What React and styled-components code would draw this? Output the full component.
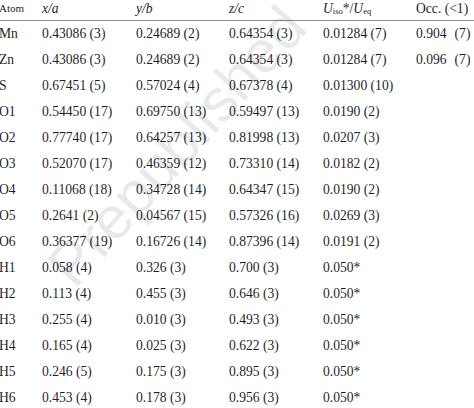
import React from "react";
import styled, { createGlobalStyle } from "styled-components";

const Global = createGlobalStyle`
  html, body { margin: 0; padding: 0; background: #fff; }
  body { font-family: "Liberation Serif", "Times New Roman", serif; color: #1f1f1f; }
`;

const Page = styled.div`
  position: relative;
  width: 474px;
  height: 408px;
  overflow: hidden;
  background: #fff;
`;

const Table = styled.div`
  margin-left: -1px;
  display: grid;
  grid-template-columns: 43px 94px 93px 94px 93px 58px;
`;

const HeadCell = styled.div`
  box-sizing: border-box;
  height: 20.5px;
  padding-top: 1px;
  border-bottom: 1.5px solid #8c8c8c;
  font-size: ${(p) => (p.$small ? "11px" : "13.6px")};
  font-style: ${(p) => (p.$italic ? "italic" : "normal")};
  line-height: 15px;
  white-space: nowrap;
`;

const Cell = styled.div`
  height: 26px;
  display: flex;
  align-items: center;
  font-size: 13.6px;
  white-space: nowrap;
`;

const Sub = styled.sub`
  font-style: normal;
  font-size: 8.5px;
  vertical-align: -1px;
`;

const Gap = styled.span`
  margin-left: ${(p) => p.$w}px;
`;

const Watermark = styled.div`
  position: absolute;
  left: 86px;
  top: 230px;
  height: 70px;
  line-height: 70px;
  transform-origin: 0 100%;
  transform: rotate(-48deg);
  font-family: "Liberation Sans", Arial, sans-serif;
  font-size: 60px;
  color: rgba(0, 0, 0, 0.085);
  white-space: nowrap;
  pointer-events: none;
`;

const rows = [
  ["Mn", "0.43086 (3)", "0.24689 (2)", "0.64354 (3)", "0.01284 (7)", ["0.904", "(7)"]],
  ["Zn", "0.43086 (3)", "0.24689 (2)", "0.64354 (3)", "0.01284 (7)", ["0.096", "(7)"]],
  ["S", "0.67451 (5)", "0.57024 (4)", "0.67378 (4)", "0.01300 (10)", null],
  ["O1", "0.54450 (17)", "0.69750 (13)", "0.59497 (13)", "0.0190 (2)", null],
  ["O2", "0.77740 (17)", "0.64257 (13)", "0.81998 (13)", "0.0207 (3)", null],
  ["O3", "0.52070 (17)", "0.46359 (12)", "0.73310 (14)", "0.0182 (2)", null],
  ["O4", "0.11068 (18)", "0.34728 (14)", "0.64347 (15)", "0.0190 (2)", null],
  ["O5", "0.2641 (2)", "0.04567 (15)", "0.57326 (16)", "0.0269 (3)", null],
  ["O6", "0.36377 (19)", "0.16726 (14)", "0.87396 (14)", "0.0191 (2)", null],
  ["H1", "0.058 (4)", "0.326 (3)", "0.700 (3)", "0.050*", null],
  ["H2", "0.113 (4)", "0.455 (3)", "0.646 (3)", "0.050*", null],
  ["H3", "0.255 (4)", "0.010 (3)", "0.493 (3)", "0.050*", null],
  ["H4", "0.165 (4)", "0.025 (3)", "0.622 (3)", "0.050*", null],
  ["H5", "0.246 (5)", "0.175 (3)", "0.895 (3)", "0.050*", null],
  ["H6", "0.453 (4)", "0.178 (3)", "0.956 (3)", "0.050*", null],
];

export default function App() {
  return (
    <>
      <Global />
      <Page>
        <Table>
          <HeadCell $small>Atom</HeadCell>
          <HeadCell $italic>x/a</HeadCell>
          <HeadCell $italic>y/b</HeadCell>
          <HeadCell $italic>z/c</HeadCell>
          <HeadCell>
            <i>U</i>
            <Sub>iso</Sub>*/<i>U</i>
            <Sub>eq</Sub>
          </HeadCell>
          <HeadCell>Occ. (&lt;1)</HeadCell>
          {rows.map((r) => (
            <React.Fragment key={r[0]}>
              <Cell>{r[0]}</Cell>
              <Cell>{r[1]}</Cell>
              <Cell>{r[2]}</Cell>
              <Cell>{r[3]}</Cell>
              <Cell>{r[4]}</Cell>
              <Cell>
                {r[5] && (
                  <>
                    {r[5][0]}
                    <Gap $w={8}>{r[5][1]}</Gap>
                  </>
                )}
              </Cell>
            </React.Fragment>
          ))}
        </Table>
        <Watermark>Prepublished</Watermark>
      </Page>
    </>
  );
}
